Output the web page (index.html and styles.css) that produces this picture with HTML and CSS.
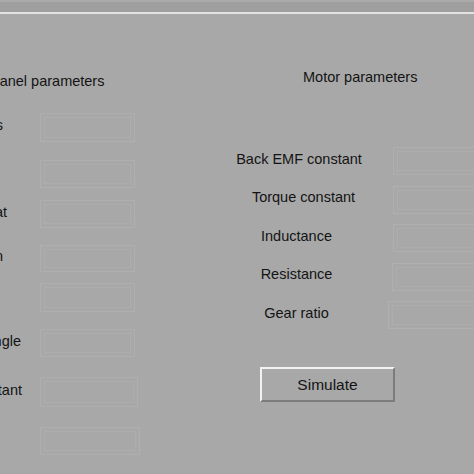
FILE: index.html
```html
<!DOCTYPE html>
<html>
<head>
<meta charset="utf-8">
<link rel="stylesheet" href="styles.css">
</head>
<body>
<div class="topbar"></div>
<div class="main">
  <section class="panel-left">
    <div class="title-left">Panel parameters</div>
    <div class="row r1"><span class="label e3">Number of cells</span><span class="field"></span></div>
    <div class="row r2"><span class="label e0">Irradiance</span><span class="field"></span></div>
    <div class="row r3"><span class="label e7">Ambient heat</span><span class="field"></span></div>
    <div class="row r4"><span class="label e3">Irradiation</span><span class="field"></span></div>
    <div class="row r5"><span class="label e0">Temperature</span><span class="field"></span></div>
    <div class="row r6"><span class="label e21">Tilt angle</span><span class="field"></span></div>
    <div class="row r7"><span class="label e22">Time constant</span><span class="field wide"></span></div>
    <div class="row r8"><span class="label e0">Area</span><span class="field wider"></span></div>
  </section>
  <section class="panel-right">
    <div class="title-right">Motor parameters</div>
    <div class="mrow m1"><span class="mlabel s1">Back EMF constant</span><span class="mfield"></span></div>
    <div class="mrow"><span class="mlabel s2">Torque constant</span><span class="mfield"></span></div>
    <div class="mrow"><span class="mlabel">Inductance</span><span class="mfield"></span></div>
    <div class="mrow"><span class="mlabel">Resistance</span><span class="mfield f4"></span></div>
    <div class="mrow"><span class="mlabel">Gear ratio</span><span class="mfield f5"></span></div>
    <button class="simulate">Simulate</button>
  </section>
</div>
</body>
</html>
```

FILE: styles.css
```css
html, body {
  margin: 0;
  padding: 0;
  width: 474px;
  height: 474px;
  overflow: hidden;
  background: #a8a8a8;
  font-family: "Liberation Sans", Arial, sans-serif;
  color: #141414;
}

.topbar {
  height: 10px;
  background: #9f9f9f;
  border-top: 2px solid #ababab;
  border-bottom: 2px solid #e2e2e2;
}

.main {
  display: flex;
  align-items: flex-start;
}

.panel-left {
  flex: 0 0 270px;
  min-width: 0;
  margin-left: -135px;
  display: flex;
  flex-direction: column;
}

.title-left {
  font-size: 14.5px;
  line-height: 17px;
  margin-top: 59px;
  padding-left: 125px;
  white-space: nowrap;
}

.row {
  display: flex;
  align-items: center;
  height: 28px;
}
.r1 { margin-top: 23px; height: 29px; }
.r2 { margin-top: 18px; }
.r3 { margin-top: 12px; }
.r4 { margin-top: 17px; height: 27px; }
.r5 { margin-top: 11px; height: 29px; }
.r6 { margin-top: 17px; }
.r7 { margin-top: 20px; height: 30px; }
.r8 { margin-top: 20px; }

.label {
  flex: 0 0 160px;
  box-sizing: border-box;
  text-align: right;
  white-space: nowrap;
  font-size: 14.5px;
  line-height: 17px;
  padding-bottom: 4px;
}
.e0 { padding-right: 40px; }
.e3 { padding-right: 22px; }
.e7 { padding-right: 18px; }
.e21 { padding-right: 4px; }
.e22 { padding-right: 3px; }

.field {
  flex: 0 0 auto;
  margin-left: 15px;
  width: 95px;
  height: 100%;
  box-sizing: border-box;
  border: 1px solid #afafaf;
  box-shadow: inset 0 0 0 3px #a8a8a8, inset 0 0 0 4px #adadad;
}
.field.wide { width: 98px; }
.field.wider { width: 100px; }

.panel-right {
  flex: 1;
  min-width: 0;
  padding-left: 65px;
  display: flex;
  flex-direction: column;
  align-items: flex-start;
}

.title-right {
  font-size: 14.5px;
  line-height: 17px;
  margin-top: 55px;
  margin-left: 103px;
  white-space: nowrap;
}

.mrow {
  display: flex;
  align-items: center;
  height: 28px;
  margin-top: 10.5px;
}
.mrow.m1 { margin-top: 61px; }

.mlabel {
  flex: 0 0 193px;
  text-align: center;
  white-space: nowrap;
  font-size: 14.5px;
  line-height: 17px;
  padding-bottom: 4px;
}
.mlabel.s1 { padding-left: 5px; box-sizing: border-box; }
.mlabel.s2 { padding-left: 14px; box-sizing: border-box; }

.mfield {
  flex: 0 0 auto;
  width: 100px;
  height: 100%;
  box-sizing: border-box;
  border: 1px solid #afafaf;
  box-shadow: inset 0 0 0 3px #a8a8a8, inset 0 0 0 4px #adadad;
}
.mfield.f4 { margin-left: -1px; }
.mfield.f5 { margin-left: -5px; }

.simulate {
  margin-top: 38px;
  margin-left: 60px;
  width: 135px;
  height: 35px;
  background: #a8a8a8;
  border-style: solid;
  border-width: 2px;
  border-color: #f2f2f2 #7c7c7c #7c7c7c #f2f2f2;
  font-family: "Liberation Sans", Arial, sans-serif;
  font-size: 15.5px;
  color: #141414;
  padding: 0;
}
```
